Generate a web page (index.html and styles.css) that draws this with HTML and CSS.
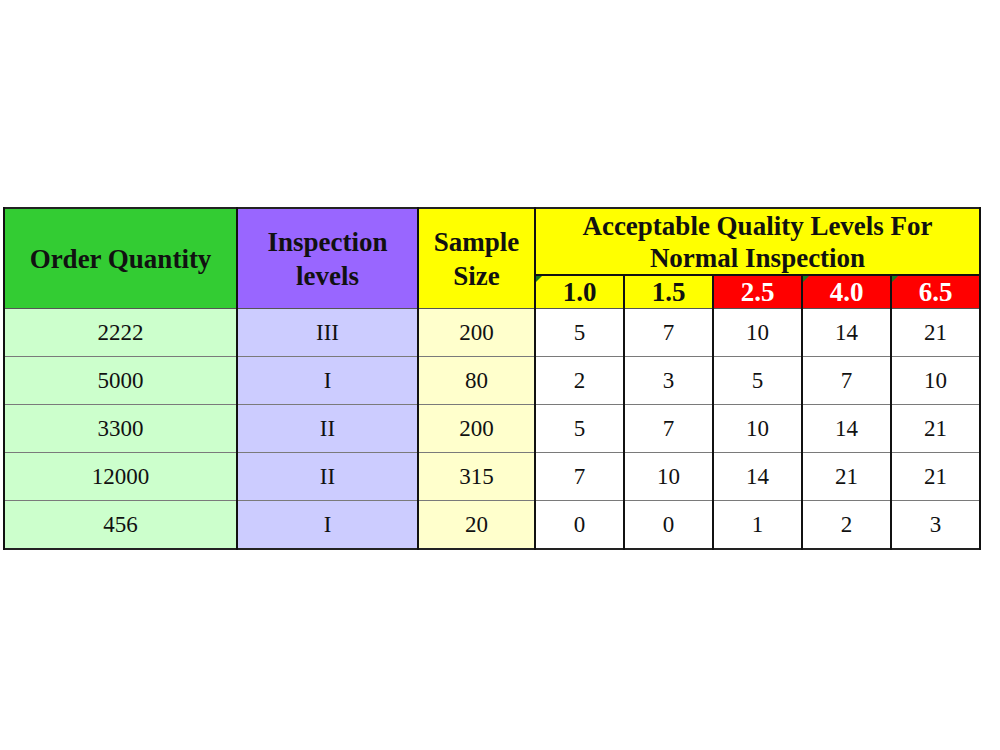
FILE: index.html
```html
<!DOCTYPE html>
<html>
<head>
<meta charset="utf-8">
<link rel="stylesheet" href="styles.css">
</head>
<body>
<div class="page">
  <table class="aql">
    <colgroup>
      <col class="c-qty"><col class="c-lvl"><col class="c-size">
      <col class="c-aql"><col class="c-aql"><col class="c-aql"><col class="c-aql"><col class="c-aql">
    </colgroup>
    <thead>
      <tr class="h1">
        <th rowspan="2" class="hd-qty">Order Quantity</th>
        <th rowspan="2" class="hd-lvl">Inspection<br>levels</th>
        <th rowspan="2" class="hd-size">Sample<br>Size</th>
        <th colspan="5" class="hd-aql">Acceptable Quality Levels For<br>Normal Inspection</th>
      </tr>
      <tr class="h2">
        <th class="y mark">1.0</th>
        <th class="y">1.5</th>
        <th class="r">2.5</th>
        <th class="r mark">4.0</th>
        <th class="r mark">6.5</th>
      </tr>
    </thead>
    <tbody>
      <tr><td class="qty">2222</td><td class="lvl">III</td><td class="size">200</td><td>5</td><td>7</td><td>10</td><td>14</td><td>21</td></tr>
      <tr><td class="qty">5000</td><td class="lvl">I</td><td class="size">80</td><td>2</td><td>3</td><td>5</td><td>7</td><td>10</td></tr>
      <tr><td class="qty">3300</td><td class="lvl">II</td><td class="size">200</td><td>5</td><td>7</td><td>10</td><td>14</td><td>21</td></tr>
      <tr><td class="qty">12000</td><td class="lvl">II</td><td class="size">315</td><td>7</td><td>10</td><td>14</td><td>21</td><td>21</td></tr>
      <tr><td class="qty">456</td><td class="lvl">I</td><td class="size">20</td><td>0</td><td>0</td><td>1</td><td>2</td><td>3</td></tr>
    </tbody>
  </table>
</div>
</body>
</html>
```

FILE: styles.css
```css
html, body {
  margin: 0;
  padding: 0;
  background: #ffffff;
}

.page {
  padding: 207px 0 0 3px;
}

.aql {
  border-collapse: collapse;
  table-layout: fixed;
  width: 978px;
  font-family: "Liberation Serif", "Times New Roman", serif;
  color: #111;
  border: 2px solid #222;
}

.c-qty { width: 233px; }
.c-lvl { width: 181px; }
.c-size { width: 117px; }
.c-aql { width: 89px; }

.aql th,
.aql td {
  padding: 0;
  text-align: center;
  vertical-align: middle;
  border-left: 2px solid #111;
  border-right: 2px solid #111;
}

.aql th {
  font-weight: bold;
  font-size: 27px;
  line-height: 34px;
}

.h1 th { height: 64px; }
.h2 th {
  height: 32px;
  line-height: 32px;
  border-top: 2px solid #111;
  border-bottom: 1px solid #555;
}

.hd-qty {
  background: #33cc33;
  border-bottom: 1px solid #555;
}
.hd-lvl {
  background: #9966ff;
  border-bottom: 1px solid #555;
}
.hd-size {
  background: #ffff00;
  border-bottom: 1px solid #555;
}
.aql th.hd-aql {
  background: #ffff00;
  vertical-align: top;
  line-height: 32px;
  padding-top: 1px;
  height: 63px;
}

.h2 .y { background: #ffff00; color: #111; }
.h2 .r { background: #ff0000; color: #ffffff; }

.mark { position: relative; }
.mark::before {
  content: "";
  position: absolute;
  left: 0;
  top: 0;
  border-top: 6px solid #1a7a1a;
  border-right: 6px solid transparent;
}

.aql td {
  height: 47px;
  font-size: 23px;
  font-weight: normal;
  background: #ffffff;
  border-top: 1px solid #7a7a7a;
  border-bottom: 1px solid #7a7a7a;
}

.aql td.qty { background: #ccffcc; }
.aql td.lvl { background: #ccccff; }
.aql td.size { background: #ffffcc; }
```
